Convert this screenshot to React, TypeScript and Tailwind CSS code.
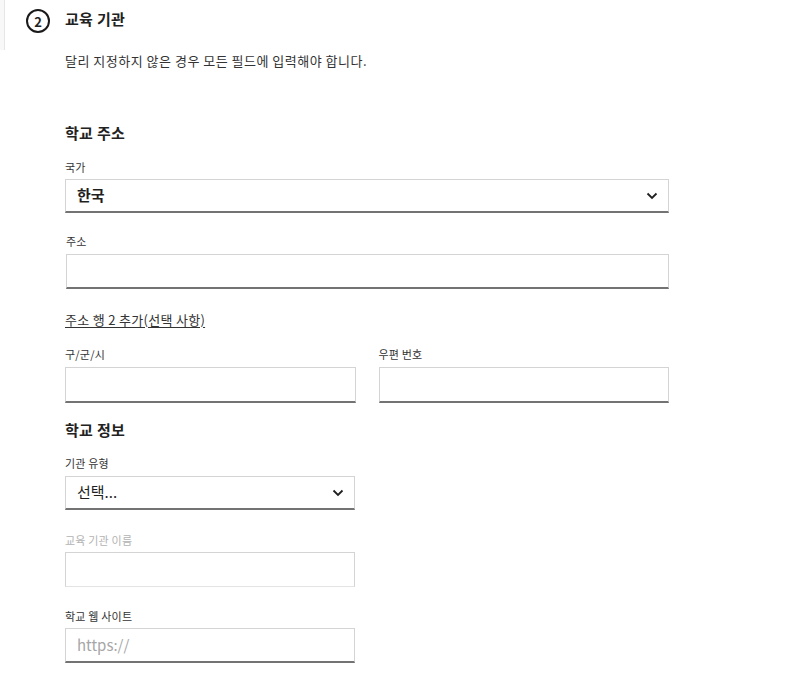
const font = "font-['Malgun_Gothic','Noto_Sans_CJK_KR','Noto_Sans',sans-serif]";

function Chevron() {
  return (
    <svg width="12" height="8" viewBox="0 0 12 8" fill="none" className="shrink-0">
      <path d="M1.5 1.5 L6 6 L10.5 1.5" stroke="#1f1f1f" strokeWidth="1.8" />
    </svg>
  );
}

function Label({ children, muted }: { children: string; muted?: boolean }) {
  return (
    <div className={`text-[11px] leading-[16px] tracking-[0.2px] ${muted ? 'text-[#b3b3b3]' : 'text-[#333]'}`}>
      {children}
    </div>
  );
}

function Input({ placeholder, disabled, tall }: { placeholder?: string; disabled?: boolean; tall?: boolean }) {
  return (
    <div
      className={`${tall ? 'h-[36px]' : 'h-[35px]'} flex items-center px-[11px] bg-white border border-t-[#d4d4d4] border-x-[#d4d4d4] ${
        disabled ? 'border-b-[#e3e3e3]' : 'border-b-2 border-b-[#737373]'
      }`}
    >
      {placeholder && <span className="text-[15px] text-[#a6a6a6]">{placeholder}</span>}
    </div>
  );
}

function Select({ value, bold }: { value: string; bold?: boolean }) {
  return (
    <div className="h-[34px] flex items-center justify-between pl-[11px] pr-[10px] bg-white border border-t-[#d4d4d4] border-x-[#d4d4d4] border-b-2 border-b-[#737373]">
      <span className={`text-[15px] text-[#1f1f1f] ${bold ? 'font-bold' : ''}`}>{value}</span>
      <Chevron />
    </div>
  );
}

export default function App() {
  return (
    <div className={`${font} w-[800px] h-[676px] bg-white flex text-[#222] overflow-hidden`}>
      {/* left rail */}
      <div className="self-start w-[5px] h-[50px] bg-[#f8f8f8] border-r border-[#e6e6e6]" />

      <div className="pl-[21px]">
        {/* step header */}
        <div className="pt-[8px] flex items-start gap-[15px]">
          <div className="mt-px w-6 h-6 rounded-full border-2 border-[#1a1a1a] flex items-center justify-center text-[13px] font-bold leading-none">
            2
          </div>
          <h2 className="text-[15px] font-bold leading-[22px] tracking-[0.3px]">교육 기관</h2>
        </div>

        <div className="pl-[39px] w-[643px]">
          <p className="mt-[18px] text-[13px] leading-[20px] tracking-[0.5px] text-[#333]">
            달리 지정하지 않은 경우 모든 필드에 입력해야 합니다.
          </p>

          {/* school address */}
          <h3 className="mt-[51px] text-[15px] font-bold leading-[22px] tracking-[0.3px]">학교 주소</h3>

          <div className="mt-[15px] w-[604px] flex flex-col gap-[4px]">
            <Label>국가</Label>
            <Select value="한국" bold />
          </div>

          <div className="mt-[20px] w-[603px] ml-px flex flex-col gap-[5px]">
            <Label>주소</Label>
            <Input />
          </div>

          <a href="#" className="block mt-[21px] text-[13px] leading-[20px] tracking-[0.3px] text-[#333] underline underline-offset-2">
            주소 행 2 추가(선택 사항)
          </a>

          <div className="mt-[16px] w-[604px] grid grid-cols-2 gap-x-[23px]">
            <div className="flex flex-col gap-[5px]">
              <Label>구/군/시</Label>
              <Input tall />
            </div>
            <div className="flex flex-col gap-[5px]">
              <Label>우편 번호</Label>
              <Input tall />
            </div>
          </div>

          {/* school info */}
          <h3 className="mt-[16px] text-[15px] font-bold leading-[22px] tracking-[0.3px]">학교 정보</h3>

          <div className="mt-[14px] w-[290px] flex flex-col gap-[5px]">
            <Label>기관 유형</Label>
            <Select value="선택..." />
          </div>

          <div className="mt-[22px] w-[290px] flex flex-col gap-[4px]">
            <Label muted>교육 기관 이름</Label>
            <Input disabled />
          </div>

          <div className="mt-[21px] w-[290px] flex flex-col gap-[4px]">
            <Label>학교 웹 사이트</Label>
            <Input placeholder="https://" />
          </div>
        </div>
      </div>
    </div>
  );
}
